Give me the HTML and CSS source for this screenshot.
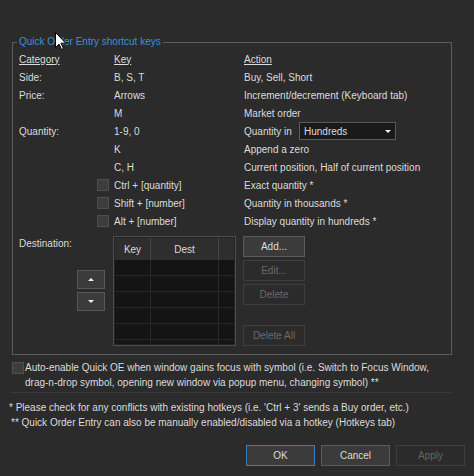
FILE: index.html
```html
<!DOCTYPE html>
<html>
<head>
<meta charset="utf-8">
<link rel="stylesheet" href="styles.css">
</head>
<body>
<div class="window">
  <div class="group">
    <div class="legend">Quick Order Entry shortcut keys</div>
    <div class="grid">
      <div class="u">Category</div><div class="u">Key</div><div class="u">Action</div>
      <div>Side:</div><div>B, S, T</div><div>Buy, Sell, Short</div>
      <div>Price:</div><div>Arrows</div><div>Increment/decrement (Keyboard tab)</div>
      <div></div><div>M</div><div>Market order</div>
      <div>Quantity:</div><div>1-9, 0</div><div class="qty"><span class="qlabel">Quantity in</span><div class="combo"><span>Hundreds</span><span class="caret"></span></div></div>
      <div></div><div>K</div><div>Append a zero</div>
      <div></div><div>C, H</div><div>Current position, Half of current position</div>
      <div class="cbcell"><span class="check"></span></div><div>Ctrl + [quantity]</div><div>Exact quantity *</div>
      <div class="cbcell"><span class="check"></span></div><div>Shift + [number]</div><div>Quantity in thousands *</div>
      <div class="cbcell"><span class="check"></span></div><div>Alt + [number]</div><div>Display quantity in hundreds *</div>
    </div>
    <div class="dest">
      <div class="dlabel">Destination:</div>
      <div class="arrows">
        <div class="abtn"><span class="tri up"></span></div>
        <div class="abtn"><span class="tri down"></span></div>
      </div>
      <div class="table">
        <div class="thead">
          <div class="th">Key</div><div class="th">Dest</div><div class="th"></div>
        </div>
        <div class="tbody">
          <div class="td"></div><div class="td"></div><div class="td"></div>
          <div class="td"></div><div class="td"></div><div class="td"></div>
          <div class="td"></div><div class="td"></div><div class="td"></div>
          <div class="td"></div><div class="td"></div><div class="td"></div>
          <div class="td"></div><div class="td"></div><div class="td"></div>
          <div class="td"></div><div class="td"></div><div class="td"></div>
        </div>
      </div>
      <div class="side-btns">
        <div class="btn">Add...</div>
        <div class="btn disabled">Edit...</div>
        <div class="btn disabled">Delete</div>
        <div class="btn disabled last">Delete All</div>
      </div>
    </div>
  </div>
  <div class="auto">
    <span class="check"></span>
    <div class="autotext">Auto-enable Quick OE when window gains focus with symbol (i.e. Switch to Focus Window,<br>drag-n-drop symbol, opening new window via popup menu, changing symbol) **</div>
  </div>
  <div class="sep"></div>
  <div class="notes">
    <div>* Please check for any conflicts with existing hotkeys (i.e. 'Ctrl + 3' sends a Buy order, etc.)</div>
    <div class="n2">** Quick Order Entry can also be manually enabled/disabled via a hotkey (Hotkeys tab)</div>
  </div>
  <div class="actions">
    <div class="dbtn ok">OK</div>
    <div class="dbtn">Cancel</div>
    <div class="dbtn disabled">Apply</div>
  </div>
  <svg class="cursor" width="12" height="19" viewBox="0 0 12 19"><path d="M0.5 0.5 L0.5 15.5 L4 12 L6.5 17.5 L8.5 16.6 L6 11.2 L10.8 11.2 Z" fill="#fff" stroke="#000" stroke-width="1"/></svg>
</div>
</body>
</html>
```
FILE: styles.css
```css
* { box-sizing: border-box; }
html, body { margin: 0; padding: 0; }
body {
  background: #2b2b2b;
  font-family: "Liberation Sans", Arial, sans-serif;
  font-size: 10px;
  color: #dcdcdc;
}
.window {
  position: relative;
  width: 474px;
  height: 476px;
  overflow: hidden;
  padding-top: 42px;
}
.group {
  margin-left: 12px;
  width: 440px;
  border: 1px solid #5c5c5c;
  padding: 0 6px 8px 6px;
}
.legend {
  display: block;
  width: max-content;
  margin-top: -8px;
  margin-left: -2px;
  padding: 0 2px;
  line-height: 14px;
  background: #2b2b2b;
  color: #3f8fd6;
}
.grid {
  margin-top: 1px;
  display: grid;
  grid-template-columns: 95px 130px 1fr;
  grid-auto-rows: 18px;
  align-items: center;
  white-space: nowrap;
}
.u { text-decoration: underline; }
.cbcell { display: flex; justify-content: flex-end; padding-right: 5px; }
.check {
  display: block;
  width: 12px;
  height: 12px;
  background: #3d3d3d;
  border: 1px solid #4e4e4e;
  flex: none;
}
.qty { display: flex; align-items: center; height: 18px; }
.qlabel { width: 55px; }
.combo {
  width: 97px;
  height: 18px;
  background: #1a1a1a;
  border: 1px solid #5a5a5a;
  display: flex;
  align-items: center;
  justify-content: space-between;
  padding: 0 4px 0 4px;
}
.caret {
  width: 0; height: 0;
  border-left: 3px solid transparent;
  border-right: 3px solid transparent;
  border-top: 3px solid #f0f0f0;
}
.dest {
  display: flex;
  margin-top: 6px;
}
.dlabel { width: 58px; padding-top: 1px; line-height: 14px; }
.arrows {
  width: 28px;
  padding-top: 34px;
  display: flex;
  flex-direction: column;
  gap: 3px;
  margin-right: 8px;
}
.abtn {
  height: 19px;
  background: #3b3b3b;
  border: 1px solid #585858;
  display: flex;
  align-items: center;
  justify-content: center;
}
.tri { width: 0; height: 0; border-left: 3px solid transparent; border-right: 3px solid transparent; }
.tri.up { border-bottom: 3px solid #f0f0f0; }
.tri.down { border-top: 3px solid #f0f0f0; }
.table {
  width: 123px;
  height: 110px;
  border: 1px solid #4e4e4e;
  padding: 1px;
  background: #222;
  margin-right: 7px;
}
.thead {
  display: grid;
  grid-template-columns: 36px 68px 1fr;
  height: 22px;
  background: #2e2e2e;
}
.th {
  border-right: 1px solid #454545;
  display: flex;
  align-items: center;
  justify-content: center;
}
.th:last-child { border-right: none; }
.tbody {
  display: grid;
  grid-template-columns: 36px 68px 1fr;
  grid-auto-rows: 16px;
  height: 84px;
  overflow: hidden;
  background: #141414;
}
.td {
  border-right: 1px solid #282828;
  border-bottom: 1px solid #282828;
}
.td:nth-child(3n) { border-right: none; }
.side-btns { display: flex; flex-direction: column; gap: 3px; width: 62px; }
.btn {
  height: 21px;
  background: #3b3b3b;
  border: 1px solid #5a5a5a;
  display: flex;
  align-items: center;
  justify-content: center;
}
.btn.disabled {
  background: #2b2b2b;
  border-color: #3e3e3e;
  color: #6a6a6a;
}
.btn.last { margin-top: 17px; }
.auto {
  display: flex;
  margin-top: 5px;
  padding-left: 12px;
}
.auto .check { margin-top: 2px; margin-right: 1px; }
.autotext { line-height: 15px; white-space: nowrap; }
.sep {
  margin: 2px 23px 0 10px;
  height: 1px;
  background: #3a3a3a;
}
.notes {
  margin-top: 7px;
  padding-left: 9px;
  line-height: 15px;
  white-space: nowrap;
}
.n2 { padding-left: 2px; }
.actions {
  display: flex;
  justify-content: flex-end;
  gap: 6px;
  margin-top: 15px;
  padding-right: 9px;
}
.dbtn {
  width: 69px;
  height: 21px;
  background: #3b3b3b;
  border: 1px solid #5a5a5a;
  display: flex;
  align-items: center;
  justify-content: center;
}
.dbtn.ok { border-color: #3a7cc0; }
.dbtn.disabled { background: #2b2b2b; border-color: #3e3e3e; color: #666; }
.cursor { position: absolute; left: 55px; top: 32px; }
```
